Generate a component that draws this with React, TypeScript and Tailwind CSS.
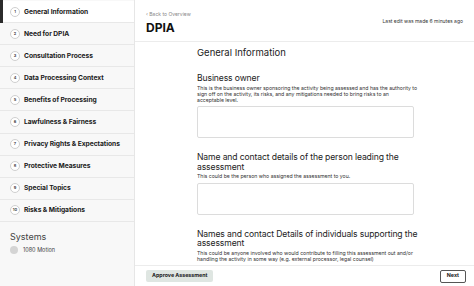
import React from 'react';

const steps = [
  'General Information',
  'Need for DPIA',
  'Consultation Process',
  'Data Processing Context',
  'Benefits of Processing',
  'Lawfulness & Fairness',
  'Privacy Rights & Expectations',
  'Protective Measures',
  'Special Topics',
  'Risks & Mitigations',
];

function Question({ title, help }: { title: React.ReactNode; help: React.ReactNode }) {
  return (
    <div>
      <h3 className="-mr-[4px] text-[8.6px] leading-[9.5px] tracking-[-0.12px] text-[#222]">{title}</h3>
      <p className="-mr-[3px] mt-[1px] text-[5.2px] leading-[6.3px] tracking-[-0.02px] text-[#333]">{help}</p>
      <div className="mt-[3px] h-[32px] rounded-[2px] border border-[#dcdcdc] bg-white" />
    </div>
  );
}

export default function App() {
  return (
    <div
      className="flex h-[286px] w-[474px] overflow-hidden bg-white text-[#111]"
      style={{ fontFamily: 'Inter, "Noto Sans", sans-serif' }}
    >
      {/* Sidebar */}
      <aside className="flex w-[135px] shrink-0 flex-col border-r border-[#e6e6e6] bg-[#f8f8f8]">
        <nav className="pt-[1px]">
          {steps.map((s, i) => (
            <div
              key={s}
              className={`relative flex h-[22.1px] items-center gap-[4px] border-b border-[#e8e8e8] pl-[10px] ${i === 0 ? 'bg-white' : ''}`}
            >
              {i === 0 && <div className="absolute -top-[1px] left-0 h-[23px] w-[3px] bg-[#2b2b2b]" />}
              <span className="flex h-[10px] w-[10px] items-center justify-center rounded-full border border-[#cfcfcf] bg-white text-[4px] font-semibold text-[#333]">
                {i + 1}
              </span>
              <span className="text-[6.7px] font-bold tracking-[-0.05px] text-[#1a1a1a]">{s}</span>
            </div>
          ))}
        </nav>
        <div className="px-[10px] pt-[9px]">
          <div className="text-[9px] leading-[11px] text-[#444]">Systems</div>
          <div className="mt-[4px] flex items-center gap-[5px]">
            <span className="h-[8px] w-[8px] rounded-full bg-[#d4d4d4]" />
            <span className="text-[5.5px] text-[#444]">1080 Motion</span>
          </div>
        </div>
      </aside>

      {/* Main */}
      <main className="flex min-w-0 flex-1 flex-col">
        <header className="flex h-[42px] shrink-0 items-start justify-between border-b border-[#ececec] px-[11px] pt-[11px]">
          <div>
            <div className="text-[5px] leading-[7px] text-[#888]">&lsaquo; Back to Overview</div>
            <h1 className="mt-[3px] text-[12px] font-bold leading-[14px] text-[#111]">DPIA</h1>
          </div>
          <div className="mt-[7px] text-[5px] text-[#333]">Last edit was made 6 minutes ago</div>
        </header>

        <div className="min-h-0 flex-1 overflow-hidden">
          <div className="ml-[62px] w-[217px] pt-[5px]">
            <h2 className="text-[9.5px] leading-[12px] text-[#222]">General Information</h2>
            <div className="mt-[15px] flex flex-col gap-[15px]">
              <Question
                title="Business owner"
                help="This is the business owner sponsoring the activity being assessed and has the authority to sign off on the activity, its risks, and any mitigations needed to bring risks to an acceptable level."
              />
              <Question
                title="Name and contact details of the person leading the assessment"
                help="This could be the person who assigned the assessment to you."
              />
              <Question
                title="Names and contact Details of individuals supporting the assessment"
                help="This could be anyone involved who would contribute to filling this assessment out and/or handling the activity in some way (e.g. external processor, legal counsel)"
              />
            </div>
          </div>
        </div>

        <footer className="flex h-[21px] shrink-0 items-center justify-between border-t border-[#ececec] pl-[11px] pr-[8px]">
          <button className="h-[12px] rounded-[2px] bg-[#dfe6e2] px-[6px] text-[5.3px] font-bold text-[#222]">
            Approve Assessment
          </button>
          <button className="h-[13px] rounded-[2px] border border-[#555] bg-white px-[6px] text-[5.3px] font-bold text-[#222]">
            Next
          </button>
        </footer>
      </main>
    </div>
  );
}
